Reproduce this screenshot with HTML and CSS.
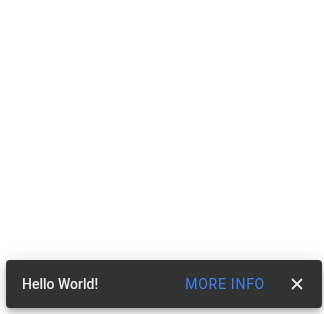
FILE: index.html
```html
<!DOCTYPE html>
<html>
<head>
<meta charset="utf-8">
<link rel="stylesheet" href="styles.css">
</head>
<body>
<div class="snackbar">
  <span class="message">Hello World!</span>
  <button class="action">MORE INFO</button>
  <button class="close" aria-label="close">
    <svg width="14" height="14" viewBox="0 0 14 14"><path d="M2 2 L12 12 M12 2 L2 12" stroke="#e8e8e8" stroke-width="1.8" fill="none"/></svg>
  </button>
</div>
</body>
</html>
```
FILE: styles.css
```css
html, body {
  margin: 0;
  padding: 0;
  background: #fff;
  width: 324px;
  height: 314px;
  overflow: hidden;
}
.snackbar {
  position: fixed;
  left: 6px;
  right: 2px;
  bottom: 6px;
  height: 48px;
  box-sizing: border-box;
  background: #323232;
  border-radius: 4px;
  box-shadow: 0 3px 5px -1px rgba(0,0,0,0.2), 0 6px 10px 0 rgba(0,0,0,0.14), 0 1px 18px 0 rgba(0,0,0,0.12);
  display: flex;
  align-items: center;
  padding: 0 8px 0 16px;
  font-family: Roboto, "Liberation Sans", sans-serif;
}
.message {
  flex: 1;
  color: rgba(255,255,255,0.9);
  font-size: 14px;
  font-weight: 500;
}
.action {
  background: none;
  border: none;
  padding: 0;
  font-family: Roboto, "Liberation Sans", sans-serif;
  font-size: 14px;
  letter-spacing: 0.75px;
  color: #3d82f0;
  margin-right: 20px;
}
.close {
  background: none;
  border: none;
  padding: 0;
  width: 24px;
  height: 24px;
  display: flex;
  align-items: center;
  justify-content: center;
  margin-right: 5px;
}
```
